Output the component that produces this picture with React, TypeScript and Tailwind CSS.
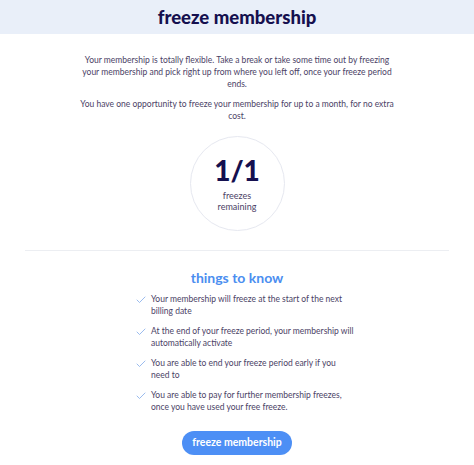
import { Check } from "lucide-react";

const items = [
  "Your membership will freeze at the start of the next billing date",
  "At the end of your freeze period, your membership will automatically activate",
  "You are able to end your freeze period early if you need to",
  "You are able to pay for further membership freezes, once you have used your free freeze.",
];

export default function App() {
  return (
    <div className="w-[474px] h-[465px] bg-white overflow-hidden" style={{ fontFamily: "Lato, sans-serif" }}>
      <div className="h-[34px] bg-[#e9eff9] flex items-center justify-center">
        <h1 className="text-[18.5px] font-black text-[#15104f] leading-none">freeze membership</h1>
      </div>

      <div className="px-[82px] pt-[20px] text-center text-[8.5px] leading-[12px] text-[#4b4266]">
        <p>
          Your membership is totally flexible. Take a break or take some time out by freezing your membership and pick
          right up from where you left off, once your freeze period ends.
        </p>
        <p className="mt-[8px] -mx-[5px]">
          You have one opportunity to freeze your membership for up to a month, for no extra cost.
        </p>
      </div>

      <div className="flex justify-center mt-[14px]">
        <div className="w-[95px] h-[95px] rounded-full border border-[#e6e8f0] flex flex-col items-center justify-center">
          <div className="text-[28px] font-black text-[#15104f] leading-none">1/1</div>
          <div className="mt-[6px] text-[9px] leading-[11px] text-[#4b4266] text-center">
            freezes
            <br />
            remaining
          </div>
        </div>
      </div>

      <div className="mx-[25px] mt-[19px] border-t border-[#eceef2]" />

      <h2 className="mt-[20px] text-center text-[14px] font-bold text-[#4b8ef0] leading-none">things to know</h2>

      <ul className="mt-[8px] pl-[135px] pr-[118px] flex flex-col gap-[8px]">
        {items.map((t) => (
          <li key={t} className="flex items-start gap-[4px]">
            <Check className="w-[12px] h-[12px] mt-[1px] shrink-0 text-[#7aa6e8]" strokeWidth={1.5} />
            <span className="text-[8.5px] leading-[12px] text-[#4b4266]">{t}</span>
          </li>
        ))}
      </ul>

      <div className="flex justify-center mt-[18px]">
        <button className="w-[110px] h-[24px] rounded-full bg-[#4d8ff5] text-white text-[10.5px] font-bold">
          freeze membership
        </button>
      </div>
    </div>
  );
}
